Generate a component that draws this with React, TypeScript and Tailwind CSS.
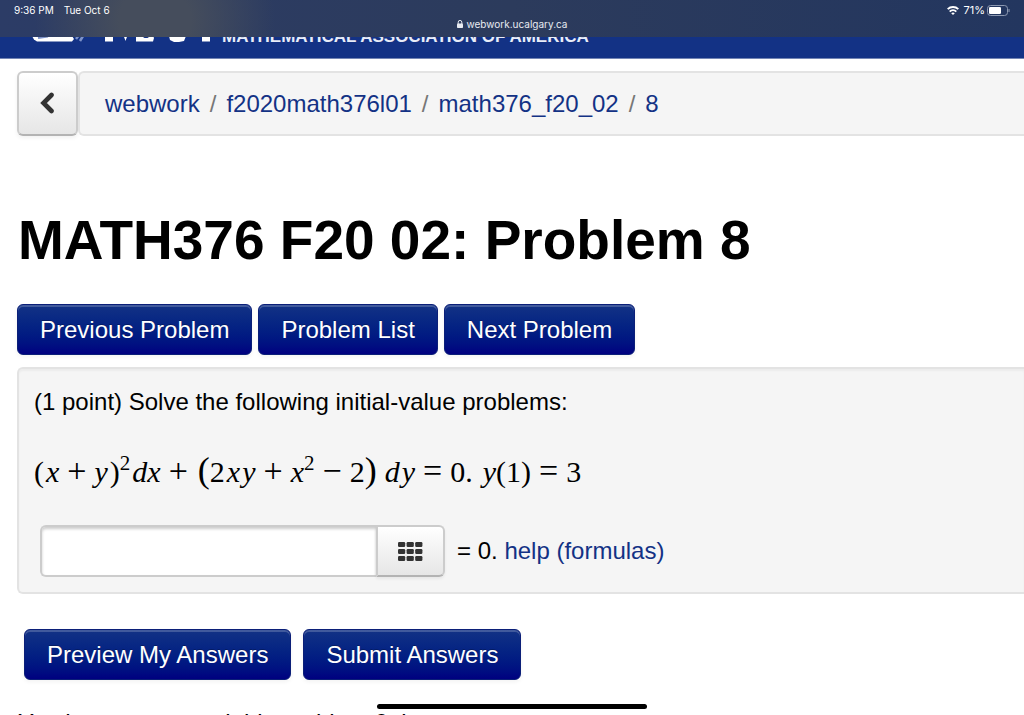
import React from "react";

const primary =
  "h-[51px] shrink-0 whitespace-nowrap rounded-md border border-[#0b1f78] bg-linear-to-b from-[#133285] to-[#000080] px-[22px] text-2xl text-white shadow-[inset_0_2px_0_rgba(255,255,255,0.2),0_2px_4px_rgba(0,0,0,0.05)] [text-shadow:0_-1px_0_rgba(0,0,0,0.25)]";

function StatusBar() {
  return (
    <div className="absolute inset-x-0 top-0 z-10 flex h-[37px] justify-between bg-linear-to-r from-[#2c3c66] via-[#2c3b5c] to-[#23365f] px-3.5 pt-1 text-[10px] leading-3 text-white">
      <div className="absolute inset-0 bg-[radial-gradient(ellipse_120px_110px_at_155px_20px,#454d5c_30%,transparent)]" />
      <div className="relative flex gap-2.5 font-[Inter,sans-serif]">
        <span>9:36 PM</span>
        <span>Tue Oct 6</span>
      </div>
      <div className="absolute inset-x-0 top-[18px] flex items-center justify-center gap-1 font-[Inter,sans-serif] text-[#e8ebf2]">
        <svg width="6" height="8" viewBox="0 0 6 8" aria-hidden="true">
          <rect y="3.4" width="6" height="4.6" rx="0.8" fill="currentColor" />
          <path d="M1.2 4V2.2a1.8 1.8 0 0 1 3.6 0V4" fill="none" stroke="currentColor" />
        </svg>
        <span>webwork.ucalgary.ca</span>
      </div>
      <div className="relative flex h-3 items-center gap-1 font-[Inter,sans-serif]">
        <svg width="12" height="9" viewBox="0 0 12 9" fill="none" stroke="currentColor" strokeWidth="1.9" aria-hidden="true">
          <path d="M.7 3.2C3.6.3 8.4.3 11.3 3.2M2.7 5.6c1.8-1.8 4.8-1.8 6.6 0" />
          <path d="M4.2 7.200 6 9l1.8-1.800C6.8 6.200 5.200 6.200 4.200 7.200Z" fill="currentColor" stroke="none" />
        </svg>
        <span className="text-[11px]">71%</span>
        <svg className="-ml-0.5" width="23" height="11" viewBox="0 0 23 11" aria-hidden="true">
          <rect x=".5" y=".5" width="20" height="10" rx="3" fill="none" stroke="#8c98b1" />
          <rect x="2" y="2" width="12" height="7" rx="1.300" fill="white" />
          <path d="M22 4v3" stroke="#8c98b1" />
        </svg>
      </div>
    </div>
  );
}

function Masthead() {
  return (
    <header className="relative h-[59px] shrink-0 overflow-hidden border-b border-[#7385b4] bg-[#133285]">
      <div className="flex h-[43px] items-end pl-8">
        <svg className="shrink-0" width="190" height="14" viewBox="32 29 190 14" fill="white" aria-hidden="true">
          <path d="M32 36h40l2 3-2 2.500H37l-3-2Z" />
          <path d="m38 38 10-1.500" stroke="#7d92c8" strokeWidth="2" />
          <path d="m76 39 3-4M80 41l3-5" stroke="#7d92c8" strokeWidth="2.500" />
          <path d="M105 29h8v12.500h-8ZM123 34h5l-2.500 7ZM136 29h14l4 9-1 3.500h-17ZM169 36h17l-2 5-5 1h-5l-4-2ZM202 29h8v12.500h-8Z" />
          <path d="m143 38 3-2 3 2Z" fill="#133285" />
        </svg>
        <span className="whitespace-nowrap font-['Liberation_Sans',sans-serif] text-[17px] font-bold leading-[13px] text-[#e8ecf7]">
          MATHEMATICAL ASSOCIATION OF AMERICA
        </span>
      </div>
      <StatusBar />
    </header>
  );
}

function Slash() {
  return <span className="px-2.5 text-[#777]">/</span>;
}

function Breadcrumb() {
  return (
    <div className="mt-3 flex h-[65px] shrink-0 pl-[17px]">
      <button
        type="button"
        aria-label="Back"
        className="flex w-[61px] shrink-0 items-center justify-center rounded-md border-2 border-[#ccc] border-b-[#b3b3b3] bg-linear-to-b from-white to-[#e6e6e6] pr-0.5 pb-0.5 shadow-[0_2px_4px_rgba(0,0,0,0.06)]"
      >
        <svg width="14" height="22" viewBox="0 0 14 22" fill="none" stroke="#333" strokeWidth="4.600" aria-hidden="true">
          <path d="m11.500 3-8 8 8 8" strokeLinejoin="miter" strokeLinecap="round" />
        </svg>
      </button>
      <nav className="flex grow items-center whitespace-nowrap rounded-l-md border-2 border-r-0 border-[#e3e3e3] bg-[#f5f5f5] pl-[25px] text-2xl text-[#133285]">
        <a href="#webwork">webwork</a>
        <Slash />
        <a href="#course">f2020math376l01</a>
        <Slash />
        <a href="#set">math376_f20_02</a>
        <Slash />
        <a href="#problem">8</a>
      </nav>
    </div>
  );
}

function Sup() {
  return <sup className="relative -top-3 text-[21px] leading-none">2</sup>;
}

function Op({ children }: { children: React.ReactNode }) {
  return <span className="px-2 text-[34px] leading-10">{children}</span>;
}

function Equation() {
  return (
    <div className="flex h-10 items-baseline whitespace-nowrap font-['Liberation_Serif',serif] text-[30px] leading-10">
      <span>(</span>
      <i className="pl-0.5">x</i>
      <Op>+</Op>
      <i>y</i>
      <span className="pl-0.5">)</span>
      <Sup />
      <i className="pl-0.5">dx</i>
      <Op>+</Op>
      <span className="pl-0.5 text-[36px] leading-10">(</span>
      <span>2</span>
      <i className="pl-0.5">x</i>
      <i className="pl-0.5">y</i>
      <Op>+</Op>
      <i>x</i>
      <Sup />
      <Op>−</Op>
      <span>2</span>
      <span className="text-[36px] leading-10">)</span>
      <i className="pl-2">d</i>
      <i className="pl-0.5">y</i>
      <Op>=</Op>
      <span>0.</span>
      <i className="pl-2.5">y</i>
      <span>(1)</span>
      <Op>=</Op>
      <span>3</span>
    </div>
  );
}

function KeypadIcon() {
  return (
    <svg width="25" height="19" viewBox="0 0 25 19" fill="#333" aria-hidden="true">
      {[0, 7, 14].map((y) =>
        [0, 8.600, 17.200].map((x) => <rect key={`${x}-${y}`} x={x} y={y} width="7.200" height="5" rx="1.200" />)
      )}
    </svg>
  );
}

export default function App() {
  return (
    <div className="relative flex h-screen flex-col overflow-hidden bg-white font-['Liberation_Sans',Arial,sans-serif] text-black">
      <Masthead />
      <Breadcrumb />
      <main>
        <h1 className="mt-[72px] whitespace-nowrap pl-[18px] text-[55px] font-bold leading-[64px]">
          MATH376 F20 02: Problem 8
        </h1>
        <div className="mt-8 flex gap-1.5 pl-[17px]">
          <button type="button" className={primary}>Previous Problem</button>
          <button type="button" className={primary}>Problem List</button>
          <button type="button" className={primary}>Next Problem</button>
        </div>
        <section className="ml-[17px] mt-3 h-[227px] rounded-l-md border-2 border-r-0 border-[#e3e3e3] bg-[#f5f5f5] pl-[15px] pt-[17px] text-2xl shadow-[inset_0_2px_2px_rgba(0,0,0,0.04)]">
          <p className="leading-8">(1 point) Solve the following initial-value problems:</p>
          <div className="mt-8">
            <Equation />
          </div>
          <div className="mt-[35px] flex items-center pl-1.5">
            <input
              type="text"
              aria-label="Answer"
              className="h-[52px] w-[336px] rounded-l-md border-2 border-r-0 border-[#ccc] bg-white px-2 shadow-[inset_0_2px_3px_rgba(0,0,0,0.2)] outline-none"
            />
            <button
              type="button"
              aria-label="Equation editor"
              className="flex h-[52px] w-[69px] items-center justify-center rounded-r-md border-2 border-[#ccc] border-b-[#b3b3b3] bg-linear-to-b from-white to-[#e6e6e6] shadow-[0_2px_3px_rgba(0,0,0,0.06)]"
            >
              <KeypadIcon />
            </button>
            <span className="pl-3">
              = 0. <a href="#help" className="text-[#133285]">help (formulas)</a>
            </span>
          </div>
        </section>
        <div className="mt-[35px] flex gap-3 pl-6">
          <button type="button" className={primary}>Preview My Answers</button>
          <button type="button" className={primary}>Submit Answers</button>
        </div>
        <p className="mt-[27px] whitespace-nowrap pl-[18px] text-2xl leading-8">You have attempted this problem 0 times.</p>
      </main>
      <div className="absolute inset-x-0 bottom-1.5 mx-auto h-[5px] w-[270px] rounded-full bg-black" />
    </div>
  );
}
